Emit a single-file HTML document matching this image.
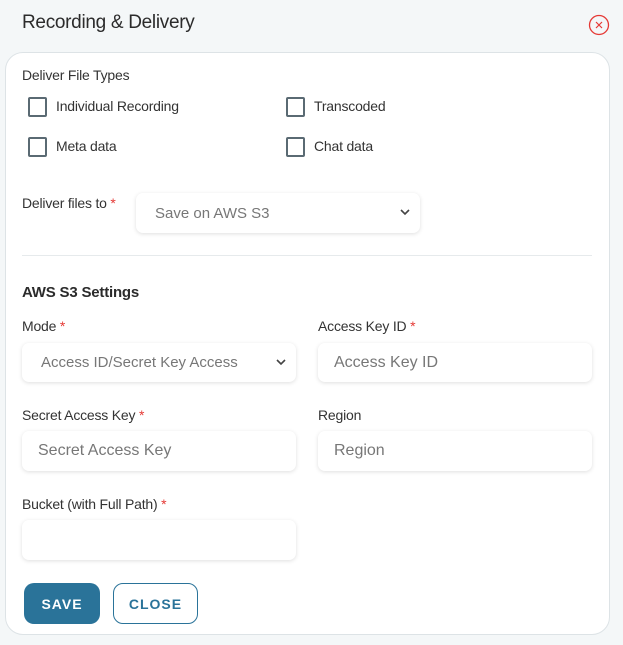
<!DOCTYPE html>
<html><head><style>
*{box-sizing:border-box;margin:0;padding:0}
body{width:623px;height:645px;background:#f4f7f8;font-family:"Liberation Sans",sans-serif;color:#333;position:relative;overflow:hidden}
.a{position:absolute}
.t{font-size:19px;color:#2b2b2b;left:22px;top:12px;letter-spacing:-0.3px}
.card{left:5px;top:52px;width:605px;height:583px;background:#fff;border:1px solid #dde3e6;border-radius:18px}
.l{font-size:14px;color:#333;letter-spacing:-0.2px}
.r{color:#e53935}
.cb{width:19px;height:20px;border:2px solid #5a6a73;border-radius:2px}
.f{background:#fff;border-radius:7px;box-shadow:0 1px 4px rgba(0,0,0,.13);font-size:16px;color:#777;padding-left:16px;display:flex;align-items:center}
.chev{position:absolute;right:10px;top:50%;margin-top:-4px}
.btn{border-radius:10px;font-size:14px;font-weight:bold;letter-spacing:1px;display:flex;align-items:center;justify-content:center}
</style></head><body>
<div class="a t">Recording &amp; Delivery</div>
<svg class="a" style="left:588px;top:14px" width="22" height="22" viewBox="0 0 22 22"><circle cx="11" cy="11" r="9.5" fill="none" stroke="#e53935" stroke-width="1.3"/><path d="M8 8l6 6M14 8l-6 6" stroke="#e53935" stroke-width="1.2"/></svg>
<div class="a card"></div>
<div class="a l" style="left:22px;top:67px">Deliver File Types</div>
<div class="a cb" style="left:28px;top:97px"></div><div class="a l" style="left:56px;top:98px">Individual Recording</div>
<div class="a cb" style="left:286px;top:97px"></div><div class="a l" style="left:314px;top:98px">Transcoded</div>
<div class="a cb" style="left:28px;top:137px"></div><div class="a l" style="left:56px;top:138px">Meta data</div>
<div class="a cb" style="left:286px;top:137px"></div><div class="a l" style="left:314px;top:138px">Chat data</div>
<div class="a l" style="left:22px;top:195px">Deliver files to <span class="r">*</span></div>
<div class="a f" style="left:136px;top:193px;width:284px;height:40px;font-size:15px;padding-left:19px">Save on AWS S3<svg class="chev" width="10" height="7" viewBox="0 0 10 7"><path d="M1 1l4 4 4-4" fill="none" stroke="#444" stroke-width="1.6"/></svg></div>
<div class="a" style="left:22px;top:255px;width:570px;height:1px;background:#e6eaec"></div>
<div class="a l" style="left:22px;top:284px;font-size:15px;font-weight:bold;color:#2b2b2b">AWS S3 Settings</div>
<div class="a l" style="left:22px;top:318px">Mode <span class="r">*</span></div>
<div class="a l" style="left:318px;top:318px">Access Key ID <span class="r">*</span></div>
<div class="a f" style="left:22px;top:343px;width:274px;height:39px;font-size:15px;padding-left:19px">Access ID/Secret Key Access<svg class="chev" width="10" height="7" viewBox="0 0 10 7"><path d="M1 1l4 4 4-4" fill="none" stroke="#444" stroke-width="1.6"/></svg></div>
<div class="a f" style="left:318px;top:343px;width:274px;height:39px">Access Key ID</div>
<div class="a l" style="left:22px;top:407px">Secret Access Key <span class="r">*</span></div>
<div class="a l" style="left:318px;top:407px">Region</div>
<div class="a f" style="left:22px;top:431px;width:274px;height:40px">Secret Access Key</div>
<div class="a f" style="left:318px;top:431px;width:274px;height:40px">Region</div>
<div class="a l" style="left:22px;top:496px">Bucket (with Full Path) <span class="r">*</span></div>
<div class="a f" style="left:22px;top:520px;width:274px;height:40px"></div>
<div class="a btn" style="left:24px;top:583px;width:76px;height:41px;background:#2a7399;color:#fff">SAVE</div>
<div class="a btn" style="left:113px;top:583px;width:85px;height:41px;border:1.5px solid #2a7399;color:#2a7399;background:#fff">CLOSE</div>
</body></html>
